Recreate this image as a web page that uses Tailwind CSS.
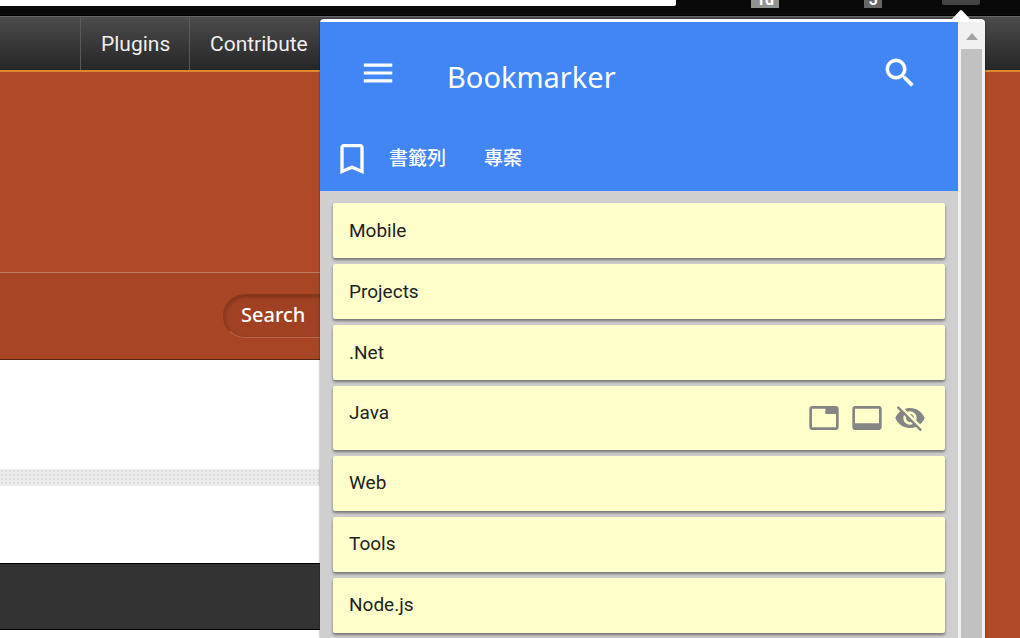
<!DOCTYPE html>
<html lang="zh-Hant">
<head>
  <meta charset="UTF-8">
  <meta name="viewport" content="width=device-width, initial-scale=1.0">
  <title>Bookmarker</title>
  <script src="https://cdn.jsdelivr.net/npm/@tailwindcss/browser@4"></script>
</head>
<body class="relative h-screen overflow-hidden bg-white font-['Roboto','Noto_Sans_CJK_TC',sans-serif]">

  <div class="flex flex-col h-full">
    <!-- Browser toolbar -->
    <div class="flex items-start h-4 shrink-0 bg-[#090909] border-b border-black">
      <div class="w-[676px] h-[6px] bg-white rounded-br-xs"></div>
      <div class="flex flex-1 items-start pl-[75px] pr-10">
        <span class="flex items-end justify-center w-7 h-2 overflow-hidden bg-[#929292] text-white text-base leading-4 font-bold">1d</span>
        <span class="flex items-end justify-center w-[18px] h-2 ml-[85px] overflow-hidden bg-[#666] text-white text-base leading-4 font-bold">5</span>
        <span class="w-[38px] h-[5px] ml-auto bg-[#444] rounded-b-xs"></span>
      </div>
    </div>

    <!-- Site navigation -->
    <nav class="flex h-14 shrink-0 pl-20 bg-linear-to-b from-[#4c4c4c] to-[#262626] border-t border-t-[#666] border-b-2 border-b-[#dc8a2c] text-[21px] text-[#eee]">
      <a href="#" class="flex items-center w-[109px] pl-5 pt-[2px] border-l border-[#5a5a5a]">Plugins</a>
      <a href="#" class="flex items-center w-[140px] pl-5 pt-[2px] border-l border-[#5a5a5a]">Contribute</a>
    </nav>

    <div class="flex flex-1 min-h-0">
      <!-- Page content -->
      <main class="flex-1 min-w-0">
        <div class="h-[200px] bg-[#b04926]"></div>
        <div class="flex items-center h-[88px] pl-[223px] bg-[#a74525] border-t border-t-[#c47a5c] border-b border-b-[#5a2614]">
          <button class="w-[220px] h-11 pl-[17px] pb-[2px] rounded-full bg-[#a14123] border border-[#8a371c] border-b-[#bb6547] shadow-[inset_0_2px_4px_rgba(0,0,0,0.25)] text-left text-white text-xl font-medium font-['Noto_Sans',sans-serif]">Search</button>
        </div>
        <div class="h-[109px]"></div>
        <div class="h-[17px] bg-[#ececec] bg-[radial-gradient(#dcdcdc_1px,transparent_1px)] bg-size-[4px_4px]"></div>
        <div class="h-[77px]"></div>
        <div class="h-[67px] bg-[#333] border-y border-black"></div>
      </main>
      <div class="w-[100px] bg-[#b04926]"></div>
    </div>
  </div>

  <!-- Extension popup -->
  <div class="absolute top-[19px] bottom-0 right-[35px] w-[665px] pt-[3px] flex bg-white rounded-t-sm shadow-[0_0_2px_rgba(0,0,0,0.6)]">
    <svg class="absolute right-[14px] -top-[10px] w-5 h-[11px]" viewBox="0 0 20 11" fill="#fff"><path d="M0 11 9 1.5Q10 .5 11 1.5L20 11z"/></svg>

    <div class="flex flex-col flex-1 min-w-0 overflow-hidden bg-[#cfcfcf]">
      <header class="shrink-0 h-[169px] bg-[#4285f4] text-white">
        <div class="flex items-center h-[102px] pl-[39px] pr-[39px]">
          <button aria-label="Menu" class="size-[38px]">
            <svg class="size-[38px]" viewBox="0 0 24 24" fill="currentColor"><path d="M3 18h18v-2H3v2zm0-5h18v-2H3v2zm0-7v2h18V6H3z"/></svg>
          </button>
          <h1 class="flex-1 pl-[50px] pt-2 text-[29px] leading-10 font-['Noto_Sans',sans-serif]">Bookmarker</h1>
          <button aria-label="Search" class="size-[38px]">
            <svg class="size-[38px]" viewBox="0 0 24 24" fill="currentColor" stroke="currentColor" stroke-width="0.3"><path d="M15.5 14h-.79l-.28-.27A6.471 6.471 0 0 0 16 9.5 6.5 6.5 0 1 0 9.5 16c1.61 0 3.09-.59 4.23-1.57l.27.28v.79l5 4.99L20.49 19l-4.99-5zm-6 0C7.01 14 5 11.99 5 9.5S7.01 5 9.5 5 14 7.01 14 9.5 11.99 14 9.5 14z"/></svg>
          </button>
        </div>
        <nav class="flex items-center h-[67px] pl-3 pt-[3px] text-[19px] font-medium">
          <svg class="size-10" viewBox="0 0 24 24" fill="currentColor"><path d="M17 3H7c-1.100 0-1.990.9-1.990 2L5 21l7-3 7 3V5c0-1.100-.9-2-2-2zm0 15l-5-2.180L7 18V5h10v13z"/></svg>
          <a href="#" class="ml-[17px]">書籤列</a>
          <a href="#" class="ml-[38px]">專案</a>
        </nav>
      </header>

      <ul class="flex flex-col gap-[6px] px-[13px] pt-3 text-[19px] leading-[22px] text-[#212121]">
        <li class="h-[55px] shrink-0 px-4 pt-[17px] bg-[#ffffcc] rounded-xs shadow-[0_2px_3px_rgba(0,0,0,0.45)]">Mobile</li>
        <li class="h-[55px] shrink-0 px-4 pt-[17px] bg-[#ffffcc] rounded-xs shadow-[0_2px_3px_rgba(0,0,0,0.45)]">Projects</li>
        <li class="h-[55px] shrink-0 px-4 pt-[17px] bg-[#ffffcc] rounded-xs shadow-[0_2px_3px_rgba(0,0,0,0.45)]">.Net</li>
        <li class="flex justify-between h-16 shrink-0 pl-4 pr-[19px] pt-4 bg-[#ffffcc] rounded-xs shadow-[0_2px_3px_rgba(0,0,0,0.45)]">
          Java
          <span class="flex gap-[11px] text-[#858585]">
            <button aria-label="Open in new tab" class="size-8">
              <svg class="size-8" viewBox="0 0 24 24" fill="currentColor"><path d="M21 3H3c-1.100 0-2 .9-2 2v14c0 1.100.9 2 2 2h18c1.100 0 2-.9 2-2V5c0-1.100-.9-2-2-2zm0 16H3V5h10v4h8v10z"/></svg>
            </button>
            <button aria-label="Open in background" class="size-8">
              <svg class="size-8" viewBox="0 0 24 24" fill="currentColor"><path d="M21 3H3c-1.100 0-2 .9-2 2v14c0 1.100.9 2 2 2h18c1.100 0 2-.9 2-2V5c0-1.100-.9-2-2-2zm0 13H3V5h18v11z"/></svg>
            </button>
            <button aria-label="Open incognito" class="size-8">
              <svg class="size-8" viewBox="0 0 24 24" fill="currentColor"><path d="M12 7c2.760 0 5 2.240 5 5 0 .65-.13 1.260-.36 1.830l2.920 2.920c1.510-1.260 2.700-2.890 3.430-4.750-1.730-4.390-6-7.500-11-7.500-1.400 0-2.740.25-3.980.7l2.160 2.160C10.740 7.130 11.350 7 12 7zM2 4.270l2.280 2.280.46.46C3.080 8.300 1.780 10.020 1 12c1.730 4.390 6 7.500 11 7.500 1.550 0 3.030-.3 4.380-.84l.42.42L19.730 22 21 20.730 3.270 3 2 4.270zM7.530 9.800l1.550 1.550c-.05.21-.08.43-.08.65 0 1.660 1.340 3 3 3 .22 0 .44-.03.65-.08l1.550 1.550c-.67.33-1.410.53-2.200.53-2.760 0-5-2.240-5-5 0-.79.2-1.530.53-2.200zm4.310-.78l3.150 3.150.02-.16c0-1.660-1.340-3-3-3l-.17.01z"/></svg>
            </button>
          </span>
        </li>
        <li class="h-[55px] shrink-0 px-4 pt-4 bg-[#ffffcc] rounded-xs shadow-[0_2px_3px_rgba(0,0,0,0.45)]">Web</li>
        <li class="h-[55px] shrink-0 px-4 pt-4 bg-[#ffffcc] rounded-xs shadow-[0_2px_3px_rgba(0,0,0,0.45)]">Tools</li>
        <li class="h-[55px] shrink-0 px-4 pt-4 bg-[#ffffcc] rounded-xs shadow-[0_2px_3px_rgba(0,0,0,0.45)]">Node.js</li>
      </ul>
    </div>

    <!-- Scrollbar -->
    <div class="flex flex-col items-center w-[27px] bg-[#f1f1f1] rounded-tr-sm">
      <svg class="w-3 h-[7px] mt-[11px] mb-[9px]" viewBox="0 0 12 7" fill="#a3a3a3"><path d="M0 7 6 0l6 7z"/></svg>
      <div class="w-[21px] flex-1 bg-[#c1c1c1]"></div>
    </div>
  </div>

</body>
</html>
